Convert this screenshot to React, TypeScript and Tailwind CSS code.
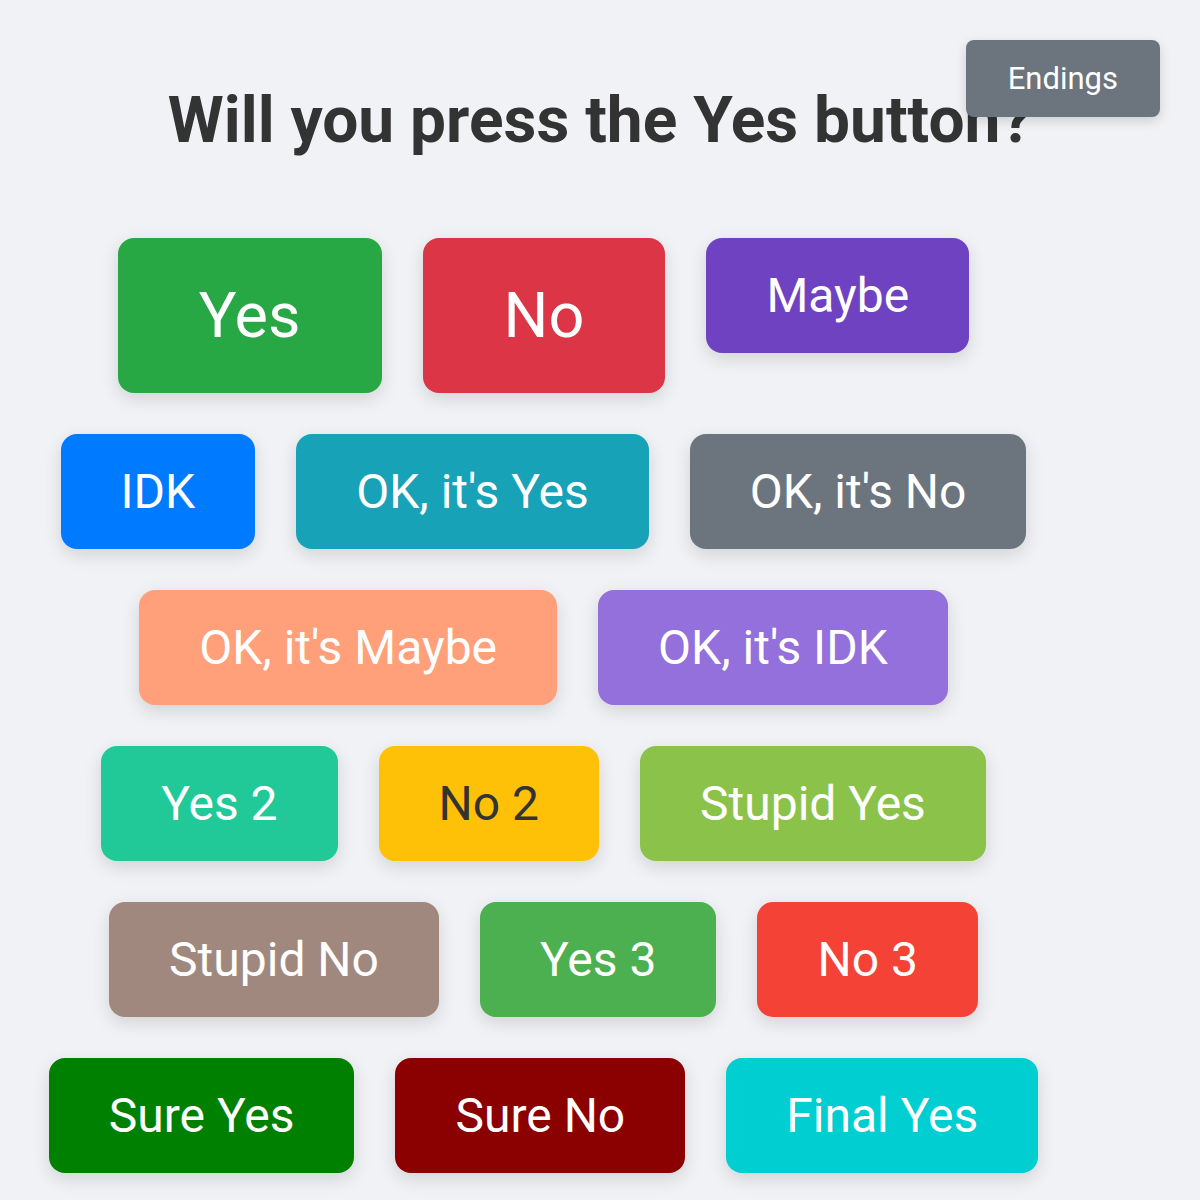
import { useState } from 'react'

interface Choice { label: string; className: string }

const choices: Choice[] = [
  { label: 'Yes', className: 'bg-[#28a745] text-white h-[155px] px-[81px] text-[63px]' },
  { label: 'No', className: 'bg-[#dc3545] text-white h-[155px] px-[81px] text-[63px]' },
  { label: 'Maybe', className: 'bg-[#6f42c1] text-white' },
  { label: 'IDK', className: 'bg-[#007bff] text-white' },
  { label: "OK, it's Yes", className: 'bg-[#17a2b8] text-white' },
  { label: "OK, it's No", className: 'bg-[#6c757d] text-white' },
  { label: "OK, it's Maybe", className: 'bg-[#ffa07a] text-white' },
  { label: "OK, it's IDK", className: 'bg-[#9370db] text-white' },
  { label: 'Yes 2', className: 'bg-[#20c997] text-white' },
  { label: 'No 2', className: 'bg-[#ffc107] text-[#333]' },
  { label: 'Stupid Yes', className: 'bg-[#8bc34a] text-white' },
  { label: 'Stupid No', className: 'bg-[#a1887f] text-white' },
  { label: 'Yes 3', className: 'bg-[#4caf50] text-white' },
  { label: 'No 3', className: 'bg-[#f44336] text-white' },
  { label: 'Sure Yes', className: 'bg-[#008000] text-white' },
  { label: 'Sure No', className: 'bg-[#8b0000] text-white' },
  { label: 'Final Yes', className: 'bg-[#00ced1] text-white' },
]

export default function App() {
  const [picked, setPicked] = useState<string | null>(null)

  return (
    <main className="relative min-h-[1200px] bg-[#f0f2f5] font-['Roboto',sans-serif]">
      <button
        type="button"
        className="absolute top-10 right-10 bg-[#6c757d] text-white text-[31px] leading-[37px] px-[42px] py-[20px] rounded-lg shadow-[0_4px_12px_rgba(0,0,0,0.15)]"
      >
        Endings
      </button>

      <h1 className="pt-[83px] text-center text-[64px] leading-[75px] font-bold text-[#333]">
        Will you press the Yes button?
      </h1>

      <div className="mt-[80px] w-[1087px] px-[20px] flex flex-wrap justify-center items-start gap-[41px]">
        {choices.map(c => (
          <button
            key={c.label}
            type="button"
            onClick={() => setPicked(c.label)}
            className={
              'h-[115px] px-[60px] text-[48px] leading-none rounded-[16px] shadow-[0_6px_18px_rgba(0,0,0,0.13)] whitespace-nowrap ' +
              c.className +
              (picked === c.label ? ' opacity-90' : '')
            }
          >
            {c.label}
          </button>
        ))}
      </div>
    </main>
  )
}
